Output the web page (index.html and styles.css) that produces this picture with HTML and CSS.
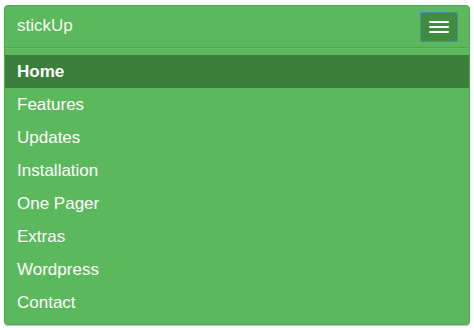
FILE: index.html
```html
<!DOCTYPE html>
<html>
<head>
<meta charset="utf-8">
<link rel="stylesheet" href="styles.css">
</head>
<body>
<div class="page">
  <nav class="navbar">
    <div class="header">
      <span class="brand">stickUp</span>
      <button class="toggle" aria-label="Toggle navigation">
        <span class="bar"></span>
        <span class="bar"></span>
        <span class="bar"></span>
      </button>
    </div>
    <ul class="menu">
      <li class="item active">Home</li>
      <li class="item">Features</li>
      <li class="item">Updates</li>
      <li class="item">Installation</li>
      <li class="item">One Pager</li>
      <li class="item">Extras</li>
      <li class="item">Wordpress</li>
      <li class="item">Contact</li>
    </ul>
  </nav>
</div>
</body>
</html>
```

FILE: styles.css
```css
html, body {
  margin: 0;
  padding: 0;
  background: #ffffff;
}
.page {
  padding: 5px 4px;
  font-family: "Liberation Sans", Arial, sans-serif;
}
.navbar {
  background: #5cb85c;
  border: 1px solid #4fa94f;
  border-radius: 4px;
  box-shadow: 0 1px 1px rgba(0,0,0,0.25);
}
.header {
  height: 41px;
  display: flex;
  align-items: flex-start;
  justify-content: space-between;
  padding: 0 11px 0 12px;
}
.brand {
  color: #f4fbf4;
  font-size: 17px;
  line-height: 40px;
}
.toggle {
  margin-top: 6px;
  width: 38px;
  height: 30px;
  background: #3f8b3f;
  border: 1px solid #4a8fa6;
  border-radius: 2px;
  padding: 0;
  display: flex;
  flex-direction: column;
  align-items: center;
  justify-content: center;
  gap: 3px;
}
.bar {
  display: block;
  width: 20px;
  height: 2px;
  background: #ffffff;
  border-radius: 1px;
}
.menu {
  list-style: none;
  margin: 0;
  padding: 7px 0 5px;
  border-top: 1px solid #4ea94e;
  box-shadow: inset 0 1px 0 rgba(255,255,255,0.08);
}
.item {
  height: 33px;
  line-height: 33px;
  padding-left: 12px;
  color: #ffffff;
  font-size: 17px;
}
.item.active {
  background: #3a7f3a;
  font-weight: bold;
}
```
